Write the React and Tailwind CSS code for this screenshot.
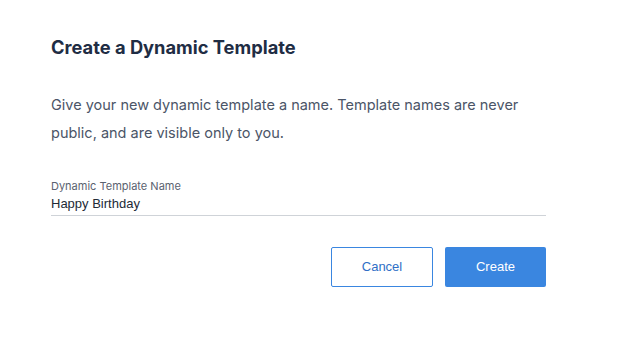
export default function App() {
  return (
    <div className="w-[642px] h-[359px] bg-white relative overflow-hidden">
      <div className="pl-[51px] pr-[96px] pt-[35px]">
        <h1 className="text-[18.3px] leading-[24px] font-bold text-[#1f2d44] font-['Inter',sans-serif]">
          Create a Dynamic Template
        </h1>
        <p className="mt-[32px] text-[14.5px] leading-[28px] text-[#4b5567] font-['Inter',sans-serif]">
          Give your new dynamic template a name. Template names are never public, and are visible only to you.
        </p>
        <div className="mt-[32px] w-[495px] border-b border-[#cfd3d8] pb-[3px]">
          <label className="block text-[11px] leading-[14px] text-[#5a6270] font-['Inter',sans-serif]">
            Dynamic Template Name
          </label>
          <div className="mt-[2px] text-[13px] leading-[17px] text-[#222a36] font-['Liberation_Sans',sans-serif]">
            Happy Birthday
          </div>
        </div>
        <div className="w-[495px] flex justify-end gap-[12px] mt-[31px]">
          <button className="w-[102px] h-[40px] border border-[#3a86e0] rounded-[2px] bg-white text-[#2f6fc6] text-[13px] font-['Liberation_Sans',sans-serif]">
            Cancel
          </button>
          <button className="w-[101px] h-[40px] rounded-[2px] bg-[#3a86e0] text-white text-[13px] font-['Liberation_Sans',sans-serif]">
            Create
          </button>
        </div>
      </div>
    </div>
  );
}
